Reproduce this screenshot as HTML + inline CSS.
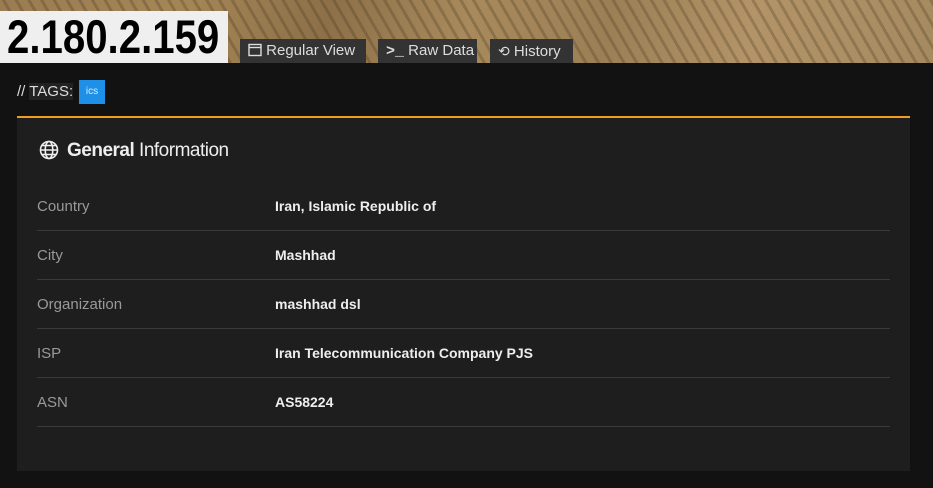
<!DOCTYPE html>
<html><head><meta charset="utf-8"><style>
*{margin:0;padding:0;box-sizing:border-box}
body{width:933px;height:488px;background:#121212;font-family:"Liberation Sans",sans-serif;overflow:hidden;position:relative;color:#ddd}
.map{position:absolute;left:0;top:0;width:933px;height:63px;background:linear-gradient(100deg,#9a7c52 0%,#a48656 20%,#8d7048 35%,#a88a5c 50%,#9c7f55 65%,#b39468 80%,#a68a60 100%)}
.map:after{content:"";position:absolute;inset:0;background:repeating-linear-gradient(60deg,rgba(60,45,25,.25) 0 3px,transparent 3px 11px)}
.ip{position:absolute;left:0;top:11px;width:228px;height:52px;background:#efefef;z-index:2;overflow:hidden}
.ip span{position:absolute;left:7px;top:0;color:#000;font-weight:bold;font-size:47px;line-height:52px;transform:scaleX(.855);transform-origin:0 50%;white-space:nowrap}
.btn{position:absolute;top:39px;height:24px;background:#333;color:#ddd;font-size:15px;line-height:24px;padding-left:8px;z-index:2}
.tags{position:absolute;left:17px;top:83px;font-size:15px;color:#ddd}
.tags span.t{background:#222}
.ics{position:absolute;left:79px;top:80px;width:26px;height:24px;background:#1e90e8;color:#dfeefc;font-size:10px;line-height:24px;text-align:center}
.panel{position:absolute;left:17px;top:116px;width:893px;height:355px;background:#1e1e1e;border-top:2px solid #f09c1c}
h2{position:absolute;left:50px;top:22px;font-size:19px;font-weight:normal;color:#eee;letter-spacing:-.5px}
h2 b{font-weight:bold}
.row{position:absolute;left:20px;width:853px;height:49px;border-bottom:1px solid #3a3a3a;font-size:15px}
.row .k{position:absolute;left:0;top:16px;color:#999}
.row .v{position:absolute;left:238px;top:16px;color:#eee;font-weight:bold;font-size:14px}
</style></head><body>
<div class="map"></div>
<div class="ip"><span>2.180.2.159</span></div>
<div class="btn" style="left:240px;width:126px"><svg width="14" height="14" style="vertical-align:-2px" viewBox="0 0 14 14"><rect x="1" y="1.5" width="12" height="11" fill="none" stroke="#ddd" stroke-width="1.4"/><line x1="1" y1="4.5" x2="13" y2="4.5" stroke="#ddd" stroke-width="1.4"/></svg> Regular View</div>
<div class="btn" style="left:378px;width:99px"><span style="font-family:'Liberation Mono';font-weight:bold">&gt;_</span> Raw Data</div>
<div class="btn" style="left:490px;width:83px"><span style="font-size:14px">&#x27F2;</span> History</div>
<div class="tags">// <span class="t">TAGS:</span></div>
<div class="ics">ics</div>
<div class="panel">
<svg style="position:absolute;left:22px;top:22px" width="20" height="20" viewBox="0 0 20 20" fill="none" stroke="#eee" stroke-width="1.6"><circle cx="10" cy="10" r="8.5"/><ellipse cx="10" cy="10" rx="3.8" ry="8.5"/><line x1="1.5" y1="10" x2="18.5" y2="10"/><line x1="3" y1="5.5" x2="17" y2="5.5"/><line x1="3" y1="14.5" x2="17" y2="14.5"/></svg>
<h2><b>General</b> Information</h2>
<div class="row" style="top:64px"><span class="k">Country</span><span class="v">Iran, Islamic Republic of</span></div>
<div class="row" style="top:113px"><span class="k">City</span><span class="v">Mashhad</span></div>
<div class="row" style="top:162px"><span class="k">Organization</span><span class="v">mashhad dsl</span></div>
<div class="row" style="top:211px"><span class="k">ISP</span><span class="v">Iran Telecommunication Company PJS</span></div>
<div class="row" style="top:260px"><span class="k">ASN</span><span class="v">AS58224</span></div>
</div>
</body></html>
